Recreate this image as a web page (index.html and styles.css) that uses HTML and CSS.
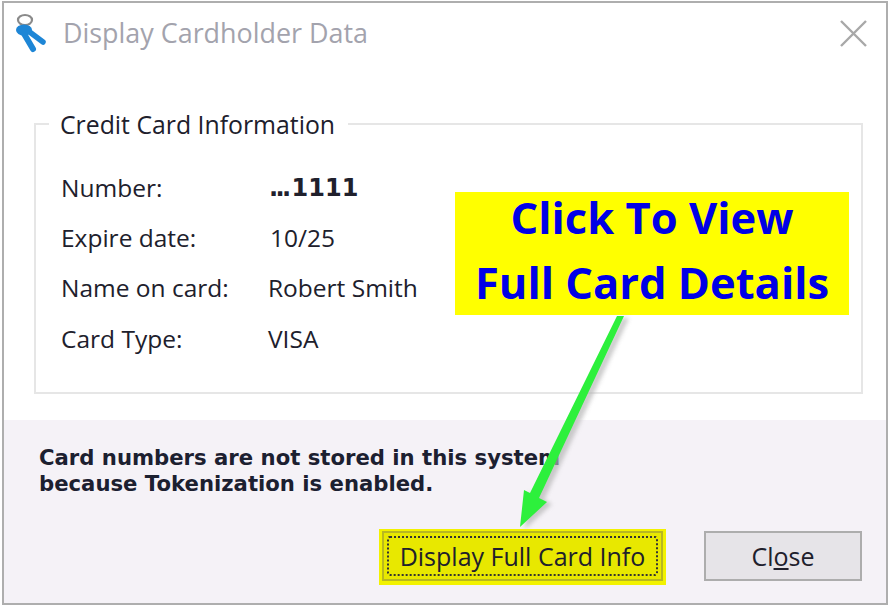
FILE: index.html
```html
<!DOCTYPE html>
<html lang="en">
<head>
  <meta charset="UTF-8">
  <meta name="viewport" content="width=device-width, initial-scale=1.0">
  <title>Display Cardholder Data</title>
  <link rel="stylesheet" href="styles.css">
</head>
<body>
  <div class="window">
    <div class="titlebar">
      <svg class="app-icon" width="38" height="42" viewBox="0 0 38 42">
        <ellipse cx="10" cy="8" rx="7" ry="5" fill="none" stroke="#8a8a8a" stroke-width="2.2"/>
        <path d="M8 20 L18 37" stroke="#1e86d6" stroke-width="6" stroke-linecap="round"/>
        <path d="M12 18 L28 30" stroke="#1e86d6" stroke-width="5.5" stroke-linecap="round"/>
        <ellipse cx="9" cy="18" rx="8" ry="5.5" fill="#1e86d6"/>
      </svg>
      <span class="title">Display Cardholder Data</span>
      <svg class="close-x" width="27" height="27" viewBox="0 0 27 27">
        <path d="M1 1 L26 26 M26 1 L1 26" stroke="#a8a8a8" stroke-width="2.4"/>
      </svg>
    </div>

    <div class="content">
      <fieldset class="card-box">
        <legend>Credit Card Information</legend>
        <div class="row"><span class="label">Number:</span><span class="value number"><span class="dots">...</span>1111</span></div>
        <div class="row"><span class="label">Expire date:</span><span class="value shifted">10/25</span></div>
        <div class="row"><span class="label">Name on card:</span><span class="value">Robert Smith</span></div>
        <div class="row"><span class="label">Card Type:</span><span class="value">VISA</span></div>
      </fieldset>
    </div>

    <div class="footer">
      <p class="note">Card numbers are not stored in this system<br>because Tokenization is enabled.</p>
      <div class="actions">
        <button class="btn btn-main"><span class="focus">Display Full Card Info</span></button>
        <button class="btn btn-close">Cl<u>o</u>se</button>
      </div>
    </div>

    <div class="callout"><div class="callout-text">Click To View<br>Full Card Details</div></div>

    <svg class="arrow" width="895" height="608" viewBox="0 0 895 608">
      <path class="arrow-shadow" d="M629 318 L544 500 L552 504 L525 529 L529 492 L535 495 L622 318 Z"/>
      <path class="arrow-fill" d="M624 316 L539 498 L547 502 L520 527 L524 490 L530 493 L617 316 Z"/>
    </svg>
  </div>
</body>
</html>
```

FILE: styles.css
```css
html, body {
  margin: 0;
  padding: 0;
  background: #fff;
}
body {
  font-family: 'Open Sans', 'Liberation Sans', sans-serif;
  color: #20202c;
  width: 895px;
  height: 608px;
  overflow: hidden;
}
.window {
  position: relative;
  box-sizing: border-box;
  width: 886px;
  height: 604px;
  margin: 1px 0 0 2px;
  border: 2px solid #aeaeae;
  background: #fff;
  display: flex;
  flex-direction: column;
}
.titlebar {
  display: flex;
  align-items: center;
  height: 60px;
  padding: 0 19px 0 11px;
}
.title {
  margin: -2px 0 0 10px;
  font-size: 26.9px;
  color: #a3a3ad;
  flex: 1;
}
.content {
  flex: 1;
  padding: 44px 23px 0 30px;
}
.card-box {
  margin: 0;
  padding: 21px 0 0 25px;
  height: 287px;
  box-sizing: border-box;
  border: 2px solid #e6e6e6;
}
.card-box legend {
  padding: 0 13px 0 11px;
  margin-left: -12px;
  font-size: 24.8px;
  line-height: 34px;
}
.row {
  display: flex;
  align-items: center;
  height: 50.4px;
  font-size: 24.5px;
}
.label {
  width: 207px;
}
.value.number {
  font-family: 'DejaVu Sans', sans-serif;
  font-weight: bold;
  font-size: 24px;
  margin: 1px 0 0 1px;
}
.dots {
  letter-spacing: -2.6px;
  margin-right: 3px;
}
.value.shifted {
  margin-left: 2px;
}
.footer {
  height: 183px;
  background: #f5f2f7;
  position: relative;
  padding: 25px 24px 22px 35px;
  box-sizing: border-box;
  display: flex;
  flex-direction: column;
  justify-content: space-between;
}
.note {
  margin: 0;
  font-family: 'DejaVu Sans', sans-serif;
  font-weight: bold;
  font-size: 21.2px;
  line-height: 26px;
  color: #1c2030;
}
.actions {
  display: flex;
  justify-content: flex-end;
  gap: 41px;
}
.btn {
  height: 50px;
  box-sizing: border-box;
  font-family: 'Open Sans', sans-serif;
  font-size: 25px;
  color: #20202c;
  padding: 0;
  border: 2px solid #adadad;
  background: #e6e4e8;
}
.btn-main {
  width: 281px;
  background: #e8e800;
  border-color: #b8b820;
  box-shadow: 0 1px 0 3px #f2f200;
  padding: 3px;
}
.btn-main .focus {
  display: flex;
  align-items: center;
  justify-content: center;
  height: 100%;
  border: 2px dotted #333;
  border-radius: 3px;
  box-sizing: border-box;
}
.btn-close {
  width: 158px;
}
.callout {
  position: absolute;
  left: 451px;
  top: 189px;
  width: 394px;
  height: 123px;
  background: #ffff00;
  color: #0000e6;
  font-family: 'Open Sans', sans-serif;
  font-weight: bold;
  font-size: 43.5px;
  line-height: 65px;
  text-align: center;
}
.callout-text {
  margin-top: -7px;
}
.arrow {
  position: absolute;
  left: -4px;
  top: -3px;
  pointer-events: none;
}
.arrow-shadow {
  fill: #b5b5b5;
  opacity: 0.7;
  filter: blur(2px);
}
.arrow-fill {
  fill: #2df03c;
}
```
